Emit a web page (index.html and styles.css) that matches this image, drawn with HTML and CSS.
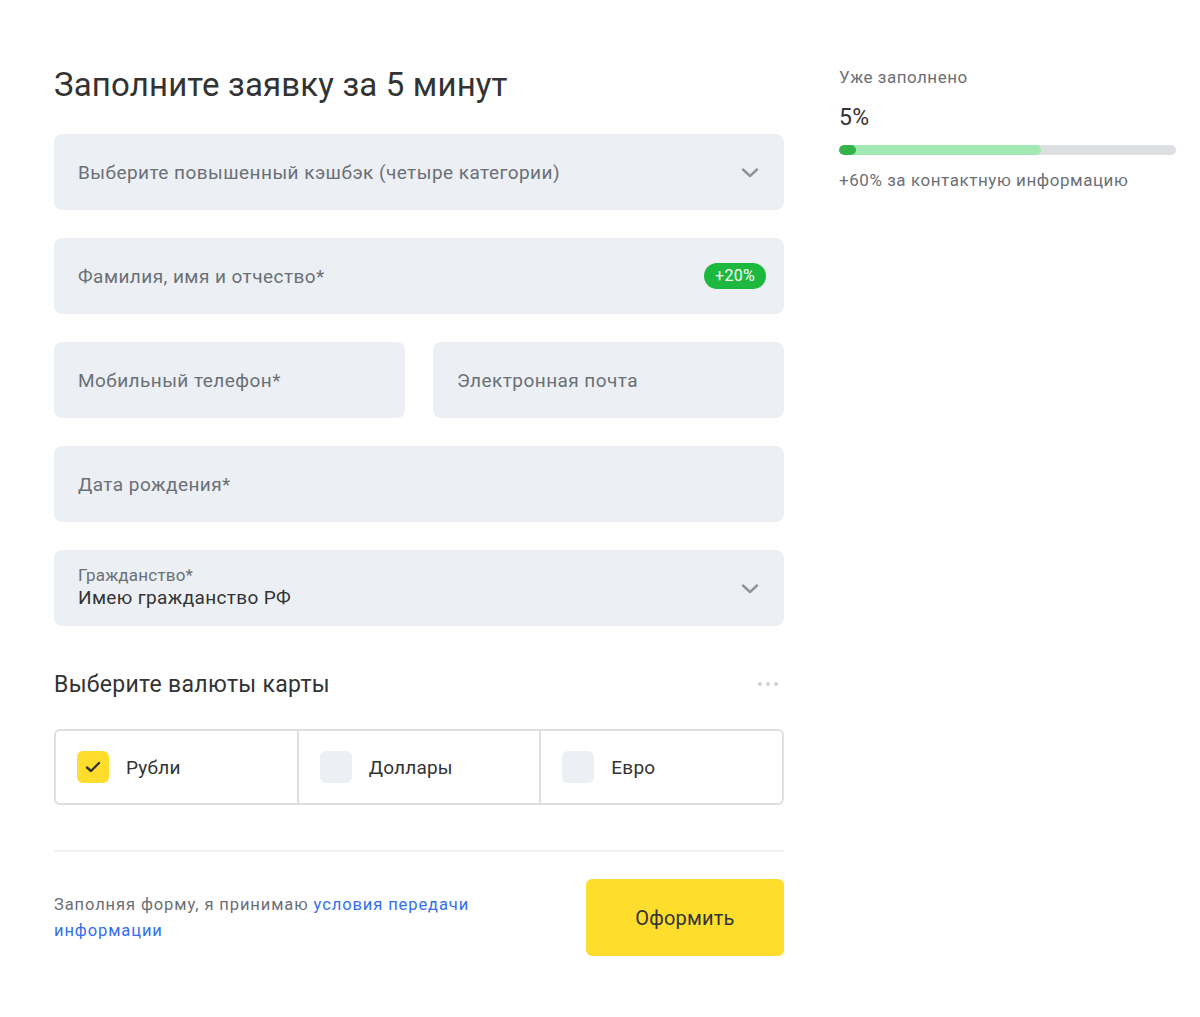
FILE: index.html
```html
<!DOCTYPE html>
<html lang="ru">
<head>
<meta charset="utf-8">
<title>Заявка</title>
<link rel="stylesheet" href="styles.css">
</head>
<body>
<div class="page">
  <main class="form">
    <h1 class="title">Заполните заявку за 5 минут</h1>

    <div class="field select">
      <span class="placeholder">Выберите повышенный кэшбэк (четыре категории)</span>
      <svg class="chevron" width="18" height="10" viewBox="0 0 18 10"><path d="M2 1.5 L9 8 L16 1.5" fill="none" stroke="#8f949b" stroke-width="2.4" stroke-linecap="round" stroke-linejoin="round"/></svg>
    </div>

    <div class="field">
      <span class="placeholder">Фамилия, имя и отчество*</span>
      <span class="badge">+20%</span>
    </div>

    <div class="row">
      <div class="field"><span class="placeholder">Мобильный телефон*</span></div>
      <div class="field"><span class="placeholder">Электронная почта</span></div>
    </div>

    <div class="field"><span class="placeholder">Дата рождения*</span></div>

    <div class="field select filled">
      <div class="filled-text">
        <span class="label">Гражданство*</span>
        <span class="value">Имею гражданство РФ</span>
      </div>
      <svg class="chevron" width="18" height="10" viewBox="0 0 18 10"><path d="M2 1.5 L9 8 L16 1.5" fill="none" stroke="#8f949b" stroke-width="2.4" stroke-linecap="round" stroke-linejoin="round"/></svg>
    </div>

    <div class="section-head">
      <h2 class="subtitle">Выберите валюты карты</h2>
      <span class="dots"><i></i><i></i><i></i></span>
    </div>

    <div class="currencies">
      <label class="currency">
        <span class="box checked">
          <svg width="16" height="12" viewBox="0 0 16 12"><path d="M2 6.5 L6 10 L14 2" fill="none" stroke="#333" stroke-width="2.4" stroke-linecap="round" stroke-linejoin="round"/></svg>
        </span>
        <span class="cur-name">Рубли</span>
      </label>
      <label class="currency">
        <span class="box"></span>
        <span class="cur-name">Доллары</span>
      </label>
      <label class="currency">
        <span class="box"></span>
        <span class="cur-name">Евро</span>
      </label>
    </div>

    <div class="divider"></div>

    <div class="footer">
      <p class="terms">Заполняя форму, я принимаю <a href="#">условия передачи информации</a></p>
      <button class="submit" type="button">Оформить</button>
    </div>
  </main>

  <aside class="progress">
    <div class="progress-label">Уже заполнено</div>
    <div class="progress-value">5%</div>
    <div class="bar">
      <div class="bar-next" style="width:60%"></div>
      <div class="bar-done" style="width:5%"></div>
    </div>
    <div class="progress-hint">+60% за контактную информацию</div>
  </aside>
</div>
</body>
</html>
```

FILE: styles.css
```css
* { box-sizing: border-box; }
html, body { margin: 0; padding: 0; background: #fff; }
body {
  font-family: Roboto, "Liberation Sans", Arial, sans-serif;
  color: #333;
}
.page {
  display: flex;
  gap: 55px;
  padding: 65px 0 0 54px;
}
.form {
  width: 730px;
  display: flex;
  flex-direction: column;
}
.title {
  margin: 0 0 29px;
  font-size: 33px;
  line-height: 40px;
  font-weight: 400;
  color: #333;
  letter-spacing: 0.15px;
}
.field {
  height: 76px;
  background: #ecf0f5;
  border-radius: 8px;
  padding: 0 18px 0 24px;
  display: flex;
  align-items: center;
  justify-content: space-between;
  margin-bottom: 28px;
}
.select { padding-right: 25px; }
.placeholder {
  font-size: 19px;
  letter-spacing: 0.45px;
  color: #6b6f76;
}
.chevron { display: block; margin-top: 2px; }
.badge {
  background: #1db93e;
  color: #fff;
  font-size: 16px;
  letter-spacing: 0.3px;
  line-height: 26px;
  height: 26px;
  padding: 0 11px;
  border-radius: 13px;
}
.row {
  display: flex;
  gap: 28px;
}
.row .field { flex: 1; }
.filled-text {
  display: flex;
  flex-direction: column;
}
.label {
  font-size: 17px;
  letter-spacing: 0.2px;
  line-height: 20px;
  color: #6b6f76;
}
.value {
  font-size: 19px;
  letter-spacing: 0.35px;
  line-height: 26px;
  color: #333;
}
.section-head {
  display: flex;
  justify-content: space-between;
  align-items: center;
  margin-top: 10px;
  height: 40px;
}
.subtitle {
  margin: 0;
  font-size: 23px;
  letter-spacing: 0.3px;
  font-weight: 400;
  color: #333;
}
.dots {
  display: flex;
  gap: 4px;
  margin-right: 6px;
}
.dots i {
  width: 4px;
  height: 4px;
  border-radius: 50%;
  background: #cfd2d6;
}
.currencies {
  margin-top: 25px;
  display: flex;
  height: 76px;
  border: 2px solid #dedfe1;
  border-radius: 6px;
}
.currency {
  flex: 1;
  display: flex;
  align-items: center;
  padding-left: 21px;
  gap: 17px;
}
.currency + .currency { border-left: 2px solid #dedfe1; }
.box {
  width: 32px;
  height: 32px;
  border-radius: 6px;
  background: #ecf0f5;
  display: flex;
  align-items: center;
  justify-content: center;
}
.box.checked { background: #ffdd2d; }
.cur-name {
  font-size: 19px;
  letter-spacing: 0.2px;
  color: #333;
}
.divider {
  margin-top: 45px;
  height: 2px;
  background: #f0f1f3;
}
.footer {
  margin-top: 27px;
  display: flex;
  justify-content: space-between;
  align-items: center;
}
.terms {
  margin: 0;
  width: 450px;
  font-size: 16.5px;
  letter-spacing: 0.9px;
  line-height: 26px;
  color: #6b6f76;
}
.terms a {
  color: #336fee;
  text-decoration: none;
}
.submit {
  width: 198px;
  height: 77px;
  border: 0;
  border-radius: 6px;
  background: #ffdd2d;
  font-family: inherit;
  font-size: 20px;
  letter-spacing: 0.2px;
  color: #333;
  cursor: pointer;
}
.progress {
  width: 337px;
  padding-top: 1px;
}
.progress-label {
  font-size: 17px;
  letter-spacing: 0.5px;
  line-height: 22px;
  color: #6b6f76;
}
.progress-value {
  margin-top: 16px;
  font-size: 23px;
  letter-spacing: 0.3px;
  line-height: 28px;
  color: #333;
}
.bar {
  position: relative;
  margin-top: 13px;
  height: 10px;
  border-radius: 5px;
  background: #dddfe3;
  overflow: hidden;
}
.bar-next, .bar-done {
  position: absolute;
  left: 0;
  top: 0;
  bottom: 0;
  border-radius: 5px;
}
.bar-next { background: #a2eab3; }
.bar-done { background: #32b44a; }
.progress-hint {
  margin-top: 14px;
  font-size: 17px;
  letter-spacing: 0.55px;
  line-height: 22px;
  color: #6b6f76;
}
```
